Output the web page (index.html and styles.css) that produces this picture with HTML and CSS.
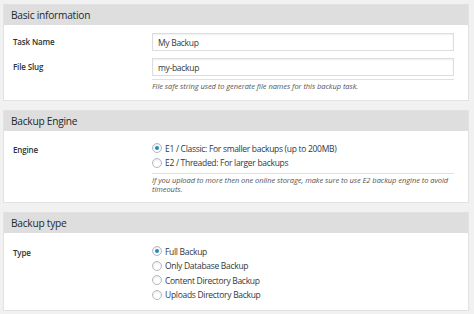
FILE: index.html
```html
<!DOCTYPE html>
<html lang="en">
<head>
    <meta charset="UTF-8">
    <title>Backup Task</title>
    <link rel="stylesheet" href="styles.css">
</head>
<body>
    <div class="panel">
        <h2 class="panel-title">Basic information</h2>
        <div class="panel-body">
            <div class="row">
                <div class="label">Task Name</div>
                <div class="field"><input class="text-input" type="text" value="My Backup"></div>
            </div>
            <div class="row">
                <div class="label">File Slug</div>
                <div class="field">
                    <input class="text-input" type="text" value="my-backup">
                    <p class="description">File safe string used to generate file names for this backup task.</p>
                </div>
            </div>
        </div>
    </div>

    <div class="panel panel-engine">
        <h2 class="panel-title">Backup Engine</h2>
        <div class="panel-body">
            <div class="row">
                <div class="label">Engine</div>
                <div class="field">
                    <label class="radio"><span class="dot checked"></span>E1 / Classic: For smaller backups (up to 200MB)</label>
                    <label class="radio"><span class="dot"></span>E2 / Threaded: For larger backups</label>
                    <p class="description">If you upload to more then one online storage, make sure to use E2 backup engine to avoid timeouts.</p>
                </div>
            </div>
        </div>
    </div>

    <div class="panel panel-type">
        <h2 class="panel-title">Backup type</h2>
        <div class="panel-body">
            <div class="row">
                <div class="label">Type</div>
                <div class="field">
                    <label class="radio"><span class="dot checked"></span>Full Backup</label>
                    <label class="radio"><span class="dot"></span>Only Database Backup</label>
                    <label class="radio"><span class="dot"></span>Content Directory Backup</label>
                    <label class="radio"><span class="dot"></span>Uploads Directory Backup</label>
                </div>
            </div>
        </div>
    </div>
</body>
</html>
```

FILE: styles.css
```css
body {
    margin: 0;
    padding: 4px 5px 0 3px;
    background-color: #f1f1f1;
    font-family: "Open Sans", Arial, sans-serif;
    color: #23282d;
}
.panel {
    background: #fff;
    border: 1px solid #e2e2e2;
    margin-bottom: 9px;
}
.panel-title {
    margin: 0;
    height: 20px;
    line-height: 20px;
    padding: 0 7px;
    background-color: #dedede;
    font-size: 10.2px;
    font-weight: normal;
    letter-spacing: -0.25px;
    color: #23282d;
}
.panel-body {
    padding: 8px 14px 9px 9px;
}
.panel-engine .panel-body {
    padding-top: 10px;
    padding-bottom: 8px;
}
.panel-type .panel-body {
    padding-top: 11px;
    padding-bottom: 8px;
}
.row {
    display: flex;
    margin-bottom: 7px;
}
.row:last-child {
    margin-bottom: 0;
}
.label {
    width: 139px;
    flex-shrink: 0;
    font-size: 8px;
    font-weight: 600;
    letter-spacing: -0.15px;
    line-height: 18px;
    color: #2c3338;
}
.field {
    flex: 1;
}
.text-input {
    display: block;
    box-sizing: border-box;
    width: 100%;
    height: 18px;
    margin: 0;
    padding: 0 5px;
    border: 1px solid #dddddd;
    box-shadow: inset 0 1px 2px rgba(0, 0, 0, 0.07);
    font-family: inherit;
    font-size: 8.5px;
    letter-spacing: -0.3px;
    color: #32373c;
}
.description {
    margin: 3px 0 0 0;
    padding-top: 2px;
    border-top: 1px solid #e0e0e0;
    font-size: 7.5px;
    font-style: italic;
    letter-spacing: -0.05px;
    line-height: 9px;
    color: #555;
}
.radio {
    display: flex;
    align-items: center;
    height: 14.5px;
    font-size: 8.5px;
    letter-spacing: -0.3px;
    color: #32373c;
}
.dot {
    box-sizing: border-box;
    width: 10px;
    height: 10px;
    margin-right: 3px;
    border: 1px solid #b4b9be;
    border-radius: 50%;
    background: #fff;
    box-shadow: inset 0 1px 2px rgba(0, 0, 0, 0.1);
    display: flex;
    align-items: center;
    justify-content: center;
}
.dot.checked::after {
    content: "";
    width: 4px;
    height: 4px;
    border-radius: 50%;
    background: #1e8cbe;
}
```
